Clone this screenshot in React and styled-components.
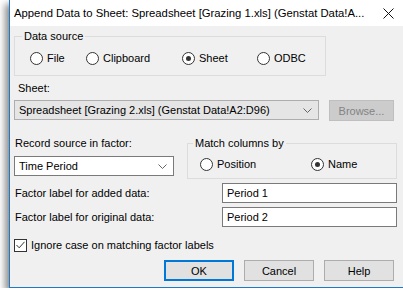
import React from 'react';
import styled, { createGlobalStyle } from 'styled-components';

const GlobalStyle = createGlobalStyle`
  html, body {
    margin: 0;
    padding: 0;
    background: #ffffff;
    overflow: hidden;
  }
  body {
    font-family: "Liberation Sans", Arial, sans-serif;
    font-size: 11px;
    color: #000;
  }
`;

const Window = styled.div`
  margin-left: 9px;
  width: 394px;
  height: 287px;
  background: #f0f0f0;
  border-left: 1px solid #1f78c8;
  border-bottom: 1px solid #1f78c8;
  box-shadow: -4px 4px 7px rgba(0, 0, 0, 0.45);
  display: flex;
  flex-direction: column;
`;

const TitleBar = styled.div`
  height: 26px;
  background: #ffffff;
  display: flex;
  align-items: center;
  padding-left: 4px;
`;

const Title = styled.div`
  flex: 1;
  font-size: 11.3px;
  white-space: nowrap;
`;

const CloseButton = styled.div`
  width: 32px;
  height: 26px;
  display: flex;
  align-items: center;
  justify-content: center;
`;

const Content = styled.div`
  padding: 0 6px 0 4px;
  display: flex;
  flex-direction: column;
`;

const Group = styled.fieldset`
  margin: ${p => p.$top || 0}px 0 0 0;
  padding: ${p => p.$pad};
  min-width: 0;
  width: ${p => p.$width}px;
  box-sizing: border-box;
  border: 1px solid #dcdcdc;
`;

const Legend = styled.legend`
  margin-left: ${p => p.$indent}px;
  padding: 0 2px;
  line-height: 13px;
`;

const RadioRow = styled.div`
  display: flex;
  align-items: center;
  height: 14px;
`;

const RadioItem = styled.label`
  display: flex;
  align-items: center;
  gap: 4px;
  width: ${p => p.$width}px;
`;

const RadioCircle = styled.span`
  width: 11px;
  height: 11px;
  border: 1px solid #333;
  border-radius: 50%;
  background: #fff;
  display: flex;
  align-items: center;
  justify-content: center;

  &::after {
    content: '';
    width: 5px;
    height: 5px;
    border-radius: 50%;
    background: ${p => (p.$checked ? '#333' : 'transparent')};
  }
`;

const FieldLabel = styled.div`
  line-height: 13px;
  margin-top: ${p => p.$top || 0}px;
  padding-left: ${p => p.$indent || 0}px;
`;

const SheetRow = styled.div`
  display: flex;
  align-items: flex-start;
  margin-top: 5px;
  height: 21px;
`;

const Combo = styled.div`
  width: ${p => p.$width}px;
  height: 20px;
  box-sizing: border-box;
  background: ${p => (p.$readonly ? '#e5e5e5' : '#ffffff')};
  border: 1px solid ${p => (p.$readonly ? '#adadad' : '#7a7a7a')};
  display: flex;
  align-items: center;
  padding: 0 6px 0 4px;
  margin-top: ${p => p.$top || 0}px;
`;

const ComboText = styled.span`
  flex: 1;
  white-space: nowrap;
`;

const Button = styled.div`
  width: ${p => p.$width || 70}px;
  height: 21px;
  box-sizing: border-box;
  display: flex;
  align-items: center;
  justify-content: center;
  background: ${p => (p.$disabled ? '#cccccc' : '#e1e1e1')};
  color: ${p => (p.$disabled ? '#838383' : '#000')};
  border: 1px solid ${p => (p.$disabled ? '#bfbfbf' : p.$default ? '#0078d7' : '#adadad')};
  box-shadow: ${p => (p.$default ? 'inset 0 0 0 1px #0078d7' : 'none')};
`;

const BrowseButton = styled(Button)`
  margin-left: auto;
  margin-right: 4px;
`;

const FactorRow = styled.div`
  display: flex;
  margin-top: 16px;
`;

const LeftColumn = styled.div`
  width: 173px;
  display: flex;
  flex-direction: column;
`;

const LabelGrid = styled.div`
  display: grid;
  grid-template-columns: 208px 175px;
  row-gap: 4px;
  margin-top: 4px;
  align-items: center;
`;

const TextBox = styled.div`
  height: 20px;
  box-sizing: border-box;
  background: #fff;
  border: 1px solid #7a7a7a;
  display: flex;
  align-items: center;
  padding-left: 4px;
`;

const CheckRow = styled.label`
  display: flex;
  align-items: center;
  gap: 4px;
  margin-top: 11px;
  height: 14px;
`;

const CheckBox = styled.span`
  width: 11px;
  height: 11px;
  border: 1px solid #333;
  background: #fff;
  display: flex;
  align-items: center;
  justify-content: center;
`;

const ButtonRow = styled.div`
  display: flex;
  justify-content: flex-end;
  gap: 10px;
  margin-top: 8px;
  margin-right: 4px;
`;

function Chevron() {
  return (
    <svg width="9" height="5" viewBox="0 0 9 5">
      <polyline points="0.5,0.5 4.5,4.5 8.5,0.5" fill="none" stroke="#666" strokeWidth="1" />
    </svg>
  );
}

function Radio({ label, width, checked }) {
  return (
    <RadioItem $width={width}>
      <RadioCircle $checked={checked} />
      <span>{label}</span>
    </RadioItem>
  );
}

export default function App() {
  return (
    <>
      <GlobalStyle />
      <Window>
        <TitleBar>
          <Title>Append Data to Sheet: Spreadsheet [Grazing 1.xls] (Genstat Data!A...</Title>
          <CloseButton>
            <svg width="11" height="11" viewBox="0 0 11 11">
              <path d="M0.5 0.5 L10.5 10.5 M10.5 0.5 L0.5 10.5" stroke="#111" strokeWidth="1" />
            </svg>
          </CloseButton>
        </TitleBar>

        <Content>
          <Group $top={4} $width={312} $pad="8px 0 10px 15px">
            <Legend $indent={-8}>Data source</Legend>
            <RadioRow>
              <Radio label="File" width={56} />
              <Radio label="Clipboard" width={96} />
              <Radio label="Sheet" width={75} checked />
              <Radio label="ODBC" width={60} />
            </RadioRow>
          </Group>

          <FieldLabel $top={6} $indent={4}>Sheet:</FieldLabel>
          <SheetRow>
            <Combo $width={305} $readonly>
              <ComboText>Spreadsheet [Grazing 2.xls] (Genstat Data!A2:D96)</ComboText>
              <Chevron />
            </Combo>
            <BrowseButton $width={65} $disabled>Browse...</BrowseButton>
          </SheetRow>

          <FactorRow>
            <LeftColumn>
              <FieldLabel $indent={1}>Record source in factor:</FieldLabel>
              <Combo $width={160} $top={6}>
                <ComboText>Time Period</ComboText>
                <Chevron />
              </Combo>
            </LeftColumn>
            <Group $width={210} $pad="7px 0 7px 12px">
              <Legend $indent={-7}>Match columns by</Legend>
              <RadioRow>
                <Radio label="Position" width={111} />
                <Radio label="Name" width={70} checked />
              </RadioRow>
            </Group>
          </FactorRow>

          <LabelGrid>
            <FieldLabel $indent={1}>Factor label for added data:</FieldLabel>
            <TextBox>Period 1</TextBox>
            <FieldLabel $indent={1}>Factor label for original data:</FieldLabel>
            <TextBox>Period 2</TextBox>
          </LabelGrid>

          <CheckRow>
            <CheckBox>
              <svg width="9" height="8" viewBox="0 0 9 8">
                <polyline points="0.5,4 3.2,6.8 8.5,0.8" fill="none" stroke="#333" strokeWidth="1" />
              </svg>
            </CheckBox>
            <span>Ignore case on matching factor labels</span>
          </CheckRow>

          <ButtonRow>
            <Button $default>OK</Button>
            <Button>Cancel</Button>
            <Button>Help</Button>
          </ButtonRow>
        </Content>
      </Window>
    </>
  );
}
